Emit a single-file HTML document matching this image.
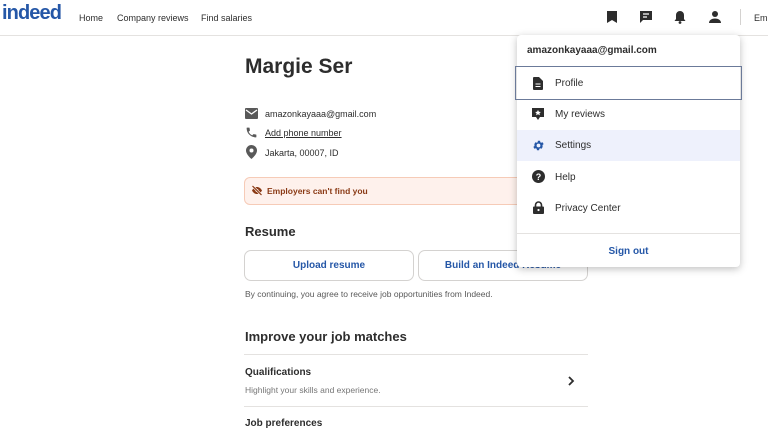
<!DOCTYPE html>
<html><head><style>
*{margin:0;padding:0;box-sizing:border-box}
body{width:768px;height:424px;overflow:hidden;background:#fff;font-family:"Liberation Sans",sans-serif;color:#2d2d2d;position:relative}
.a{position:absolute;white-space:nowrap}
.nav{position:absolute;left:0;top:0;width:768px;height:36px;border-bottom:1px solid #e4e2e0}
.logo{left:2px;top:2px;font-size:20px;font-weight:bold;color:#2557a7;letter-spacing:-0.9px}
.nl{top:13px;font-size:9px;color:#2d2d2d}
.ico{position:absolute}
.dd{position:absolute;left:517px;top:35px;width:223px;height:232px;background:#fff;border-radius:4px;box-shadow:0 2px 8px rgba(0,0,0,.25)}
.mi{position:absolute;left:0;width:223px;font-size:10px;color:#2d2d2d}
.btn{position:absolute;top:250px;height:31px;border:1px solid #d4d2d0;border-radius:7px;color:#2557a7;font-weight:bold;font-size:10px;text-align:center;line-height:29px}
.t{font-size:10px}
</style></head><body>
<div class="nav"></div>
<div class="a logo">indeed</div>
<div class="a nl" style="left:79px">Home</div>
<div class="a nl" style="left:117px">Company reviews</div>
<div class="a nl" style="left:201px">Find salaries</div>
<svg class="ico" style="left:605px;top:10px" width="14" height="14" viewBox="0 0 14 14"><path d="M2 1h10v12l-5-3-5 3z" fill="#2d2d2d"/></svg>
<svg class="ico" style="left:639px;top:10px" width="14" height="14" viewBox="0 0 14 14"><path d="M1 1h12v9H4l-3 3z" fill="#2d2d2d"/><path d="M4 4h6M4 7h4" stroke="#fff" stroke-width="1.2"/></svg>
<svg class="ico" style="left:673px;top:10px" width="14" height="14" viewBox="0 0 14 14"><path d="M7 1a4 4 0 0 1 4 4v4l1.5 2h-11L3 9V5a4 4 0 0 1 4-4z" fill="#2d2d2d"/><circle cx="7" cy="12.5" r="1.4" fill="#2d2d2d"/></svg>
<svg class="ico" style="left:708px;top:10px" width="14" height="14" viewBox="0 0 14 14"><circle cx="7" cy="4" r="3" fill="#2d2d2d"/><path d="M1 13c0-3 3-4.5 6-4.5s6 1.5 6 4.5z" fill="#2d2d2d"/></svg>
<div class="a" style="left:740px;top:9px;width:1px;height:16px;background:#d4d2d0"></div>
<div class="a nl" style="left:754px">Emp</div>

<div class="a" style="left:245px;top:55px;font-size:21px;font-weight:bold;color:#2d2d2d">Margie Ser</div>
<svg class="ico" style="left:245px;top:108px" width="13" height="11" viewBox="0 0 13 11"><rect width="13" height="11" rx="1" fill="#595959"/><path d="M1 2l5.5 4L12 2" stroke="#fff" stroke-width="1.3" fill="none"/></svg>
<div class="a" style="left:265px;top:109px;font-size:9px">amazonkayaaa@gmail.com</div>
<svg class="ico" style="left:245px;top:126px" width="13" height="13" viewBox="0 0 24 24"><path d="M6.6 10.8a15 15 0 0 0 6.6 6.6l2.2-2.2c.3-.3.7-.4 1-.2 1.1.4 2.3.6 3.6.6.6 0 1 .4 1 1V20c0 .6-.4 1-1 1A17 17 0 0 1 3 4c0-.6.4-1 1-1h3.5c.6 0 1 .4 1 1 0 1.3.2 2.5.6 3.6.1.3 0 .7-.2 1z" fill="#595959"/></svg>
<div class="a" style="left:265px;top:128px;font-size:9px;text-decoration:underline">Add phone number</div>
<svg class="ico" style="left:246px;top:145px" width="11" height="14" viewBox="0 0 11 14"><path d="M5.5 0A5.5 5.5 0 0 0 0 5.5C0 9.5 5.5 14 5.5 14S11 9.5 11 5.5A5.5 5.5 0 0 0 5.5 0z" fill="#595959"/><circle cx="5.5" cy="5.5" r="2" fill="#fff"/></svg>
<div class="a" style="left:265px;top:148px;font-size:9px">Jakarta, 00007, ID</div>
<div class="a" style="left:244px;top:177px;width:300px;height:28px;background:#fef1ec;border:1px solid #f6cbb7;border-radius:6px"></div>
<svg class="ico" style="left:251px;top:185px" width="12" height="11" viewBox="0 0 12 11"><path d="M1 5.5C2.5 3 4 2 6 2s3.5 1 5 3.5C9.5 8 8 9 6 9S2.5 8 1 5.5z" fill="#8a3a15"/><circle cx="6" cy="5.5" r="1.5" fill="#fef1ec"/><path d="M1.5 1l9 9" stroke="#fef1ec" stroke-width="2.4"/><path d="M1.5 1l9 9" stroke="#8a3a15" stroke-width="1.2"/></svg>
<div class="a" style="left:267px;top:186px;font-size:8.5px;font-weight:bold;color:#8a3a15">Employers can't find you</div>
<div class="a" style="left:245px;top:224px;font-size:13px;font-weight:bold">Resume</div>
<div class="btn" style="left:244px;width:170px">Upload resume</div>
<div class="btn" style="left:418px;width:170px">Build an Indeed Resume</div>
<div class="a" style="left:245px;top:289px;font-size:8.5px;color:#595959">By continuing, you agree to receive job opportunities from Indeed.</div>
<div class="a" style="left:245px;top:329px;font-size:13px;font-weight:bold">Improve your job matches</div>
<div class="a" style="left:244px;top:354px;width:344px;height:1px;background:#e4e2e0"></div>
<div class="a" style="left:245px;top:367px;font-size:10px;font-weight:bold">Qualifications</div>
<div class="a" style="left:245px;top:385px;font-size:8.5px;color:#767676">Highlight your skills and experience.</div>
<svg class="ico" style="left:567px;top:376px" width="8" height="10" viewBox="0 0 8 10"><path d="M2 1l4 4-4 4" stroke="#2d2d2d" stroke-width="1.8" fill="none"/></svg>
<div class="a" style="left:244px;top:406px;width:344px;height:1px;background:#e4e2e0"></div>
<div class="a" style="left:245px;top:418px;font-size:10px;font-weight:bold">Job preferences</div>

<div class="dd">
<div class="a" style="left:10px;top:10px;font-size:10px;font-weight:bold">amazonkayaaa@gmail.com</div>
<div class="mi" style="top:31px;height:34px;border:1px solid #6b7a99;left:-2px;width:227px"></div>
<svg class="ico" style="left:16px;top:42px" width="10" height="13" viewBox="0 0 10 13"><path d="M0 1a1 1 0 0 1 1-1h5l4 4v8a1 1 0 0 1-1 1H1a1 1 0 0 1-1-1z" fill="#2d2d2d"/><path d="M2.5 7h5M2.5 9.5h5" stroke="#fff" stroke-width="1.1"/></svg>
<div class="a t" style="left:38px;top:43px">Profile</div>
<svg class="ico" style="left:15px;top:73px" width="12" height="13" viewBox="0 0 12 13"><path d="M0 0h12v9H8l-2 3-2-3H0z" fill="#2d2d2d"/><path d="M6 2l.9 1.8 2 .2-1.5 1.3.5 2L6 6.3 4.1 7.3l.5-2L3.1 4l2-.2z" fill="#fff"/></svg>
<div class="a t" style="left:38px;top:74px">My reviews</div>
<div class="mi" style="top:95px;height:31px;background:#eef1fc"></div>
<svg class="ico" style="left:15px;top:104px" width="13" height="13" viewBox="0 0 24 24"><path d="M19.4 13a7.5 7.5 0 0 0 0-2l2.1-1.6-2-3.5-2.5 1a7 7 0 0 0-1.7-1l-.4-2.7h-4l-.4 2.7a7 7 0 0 0-1.7 1l-2.5-1-2 3.5L4.6 11a7.5 7.5 0 0 0 0 2l-2.1 1.6 2 3.5 2.5-1a7 7 0 0 0 1.7 1l.4 2.7h4l.4-2.7a7 7 0 0 0 1.7-1l2.5 1 2-3.5zM12 15.5a3.5 3.5 0 1 1 0-7 3.5 3.5 0 0 1 0 7z" fill="#2557a7"/></svg>
<div class="a t" style="left:38px;top:105px">Settings</div>
<svg class="ico" style="left:15px;top:135px" width="13" height="13" viewBox="0 0 13 13"><circle cx="6.5" cy="6.5" r="6.5" fill="#2d2d2d"/><text x="6.5" y="10" font-size="9" font-weight="bold" fill="#fff" text-anchor="middle" font-family="Liberation Sans">?</text></svg>
<div class="a t" style="left:38px;top:137px">Help</div>
<svg class="ico" style="left:16px;top:166px" width="11" height="13" viewBox="0 0 11 13"><path d="M2.5 6V4a3 3 0 0 1 6 0v2" stroke="#2d2d2d" stroke-width="1.6" fill="none"/><rect x="0" y="5.5" width="11" height="7.5" rx="1" fill="#2d2d2d"/><circle cx="5.5" cy="9" r="1.1" fill="#fff"/></svg>
<div class="a t" style="left:38px;top:168px">Privacy Center</div>
<div class="a" style="left:0;top:198px;width:223px;height:1px;background:#e4e2e0"></div>
<div class="a" style="left:0;top:211px;width:223px;text-align:center;font-size:10px;font-weight:bold;color:#2557a7">Sign out</div>
</div>
</body></html>
